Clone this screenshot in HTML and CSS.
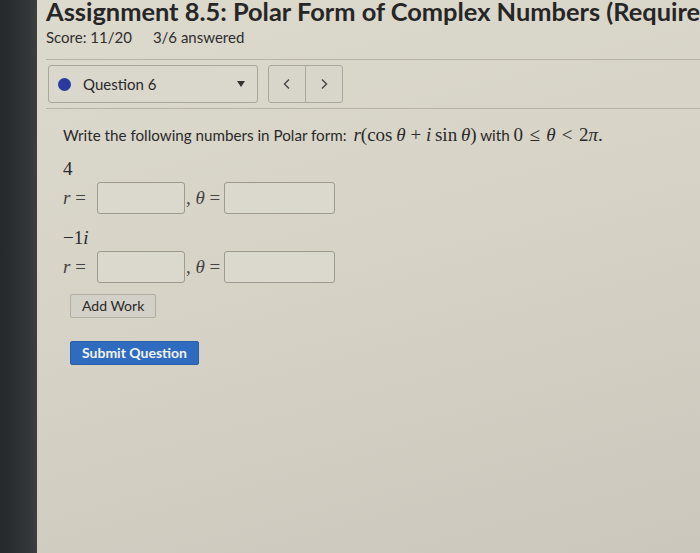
FILE: index.html
```html
<!DOCTYPE html>
<html>
<head>
<meta charset="utf-8">
<link rel="stylesheet" href="styles.css">
</head>
<body>
<div class="frame">
  <div class="bezel"></div>
  <main class="page">
    <h1 class="title">Assignment 8.5: Polar Form of Complex Numbers (Required)</h1>
    <div class="score"><span>Score: 11/20</span><span>3/6 answered</span></div>
    <div class="qnav">
      <div class="qselect">
        <span class="dot"></span>
        <span class="qlabel">Question 6</span>
        <span class="caret"></span>
      </div>
      <div class="arrows">
        <span class="arrow"><svg width="10" height="12" viewBox="0 0 10 12"><polyline points="7,1.5 2.5,6 7,10.5" fill="none" stroke="#444" stroke-width="1.4"/></svg></span>
        <span class="arrow"><svg width="10" height="12" viewBox="0 0 10 12"><polyline points="3,1.5 7.5,6 3,10.5" fill="none" stroke="#444" stroke-width="1.4"/></svg></span>
      </div>
    </div>
    <section class="question">
      <p class="prompt">Write the following numbers in Polar form: <span class="math m1"><i>r</i>(cos&#8201;<i>&theta;</i>&#8197;+&#8197;<i>i</i>&#8201;sin&#8201;<i>&theta;</i>)</span> with <span class="math">0&#8196;&le;&#8196;<i>&theta;</i>&#8196;&lt;&#8196;2<i>&pi;</i>.</span></p>
      <div class="part">
        <div class="num math">4</div>
        <div class="row">
          <span class="math lbl"><i>r</i>&#8197;=</span>
          <span class="box small"></span>
          <span class="math lbl sep">, <i>&theta;</i>&#8197;=</span>
          <span class="box large"></span>
        </div>
      </div>
      <div class="part">
        <div class="num math">&minus;1<i>i</i></div>
        <div class="row">
          <span class="math lbl"><i>r</i>&#8197;=</span>
          <span class="box small"></span>
          <span class="math lbl sep">, <i>&theta;</i>&#8197;=</span>
          <span class="box large"></span>
        </div>
      </div>
      <div class="buttons">
        <button class="btn addwork">Add Work</button>
        <button class="btn submit">Submit Question</button>
      </div>
    </section>
  </main>
</div>
</body>
</html>
```
FILE: styles.css
```css
html, body {
  margin: 0;
  padding: 0;
  width: 700px;
  height: 553px;
  overflow: hidden;
}
body {
  font-family: "Lato", "DejaVu Sans", sans-serif;
  color: #2a2a2a;
}
.frame {
  display: flex;
  width: 700px;
  height: 553px;
}
.bezel {
  width: 37px;
  flex: none;
  background: linear-gradient(90deg, #25282a, #34373a 80%, #3d3f40);
}
.page {
  flex: 1;
  min-width: 0;
  padding-left: 9px;
  background: linear-gradient(165deg, #dcd9cd 0%, #d7d3c7 45%, #ccc7bc 100%);
  overflow: hidden;
}
.title {
  margin: -5px 0 0 0;
  font-size: 25.4px;
  line-height: 32px;
  font-weight: 700;
  white-space: nowrap;
  color: #262626;
}
.score {
  display: flex;
  gap: 21px;
  font-size: 15px;
  line-height: 20px;
  margin-top: 0;
  color: #2e2e2e;
}
.qnav {
  margin-top: 12px;
  border-top: 1px solid #b7b3a8;
  border-bottom: 1px solid #b7b3a8;
  padding: 5px 0 5px 2px;
  display: flex;
  align-items: center;
  gap: 10px;
}
.qselect {
  box-sizing: border-box;
  width: 210px;
  height: 38px;
  border: 1px solid #aaa69c;
  border-radius: 3px;
  background: #dad7cc;
  display: flex;
  align-items: center;
  padding: 0 9px 0 9px;
}
.dot {
  width: 13px;
  height: 13px;
  border-radius: 50%;
  background: #2b3a9e;
  margin-right: 12px;
}
.qlabel {
  flex: 1;
  font-size: 15px;
}
.caret {
  width: 0;
  height: 0;
  border-left: 4px solid transparent;
  border-right: 4px solid transparent;
  border-top: 6px solid #333;
  margin-right: 3px;
}
.arrows {
  display: flex;
  height: 38px;
  border: 1px solid #aaa69c;
  border-radius: 3px;
  background: #d8d5ca;
  box-sizing: border-box;
}
.arrow {
  width: 36px;
  display: flex;
  align-items: center;
  justify-content: center;
}
.arrow + .arrow {
  border-left: 1px solid #aaa69c;
}
.question {
  padding-left: 17px;
}
.prompt {
  margin: 15px 0 0 0;
  font-size: 15.2px;
  line-height: 22px;
}
.math {
  font-family: "Liberation Serif", "DejaVu Serif", serif;
  font-size: 19px;
}
.m1 {
  margin-left: 3px;
}
.math i {
  font-style: italic;
}
.part {
  margin-top: 12px;
}
.num {
  line-height: 22px;
}
.row {
  display: flex;
  align-items: center;
  height: 34px;
  margin-top: 1px;
}
.lbl {
  color: #444;
}
.row .lbl:first-child {
  width: 34px;
}
.box {
  height: 32px;
  border: 1px solid #9e9a90;
  border-radius: 3px;
  background: #dbd8ce;
  box-sizing: border-box;
}
.box.small { width: 88px; }
.box.large { width: 111px; margin-left: 4px; }
.sep { margin-left: 1px; }
.buttons {
  display: flex;
  flex-direction: column;
  align-items: flex-start;
  gap: 23px;
  margin-top: 10px;
  padding-left: 7px;
}
.btn {
  font-family: "Lato", "DejaVu Sans", sans-serif;
  font-size: 14px;
  height: 24px;
  padding: 0 11px;
  border-radius: 2px;
  line-height: 22px;
}
.addwork {
  background: #d3d0c7;
  border: 1px solid #b0ada4;
  color: #2a2a2a;
}
.submit {
  background: #2f6cc0;
  border: 1px solid #2a5ea8;
  color: #f2f2f2;
  font-weight: 700;
}
```
